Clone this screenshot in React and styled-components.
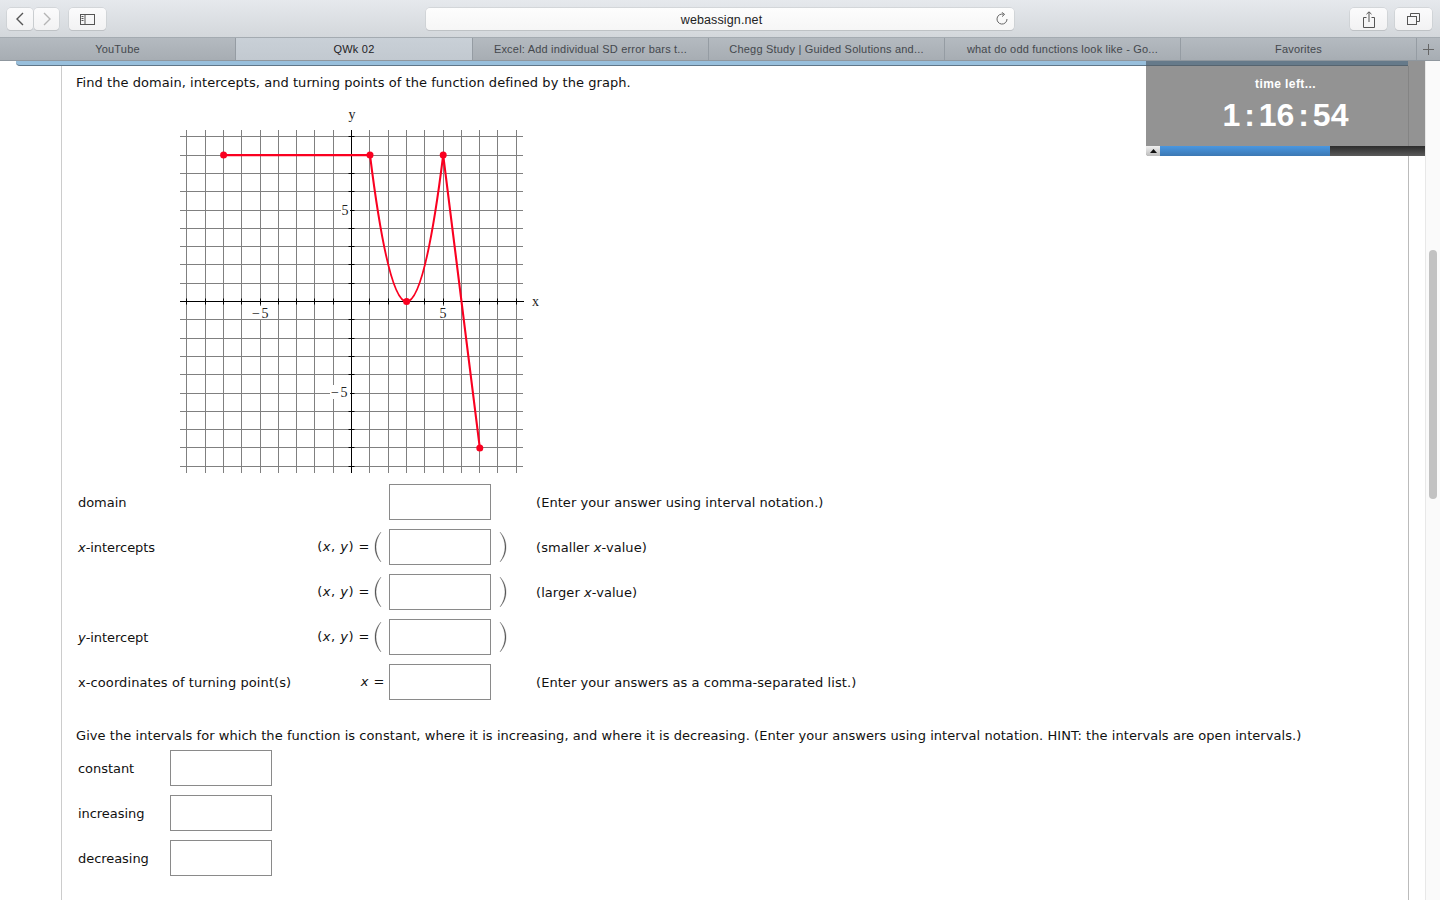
import React from "react";
import styled, { createGlobalStyle } from "styled-components";

const GlobalStyle = createGlobalStyle`
	html, body {
		margin: 0;
		padding: 0;
		height: 100%;
		overflow: hidden;
		background: #fff;
	}
`;

const Window = styled.div`
	width: 1440px;
	height: 900px;
	display: flex;
	flex-direction: column;
	overflow: hidden;
	font-family: "DejaVu Sans", Verdana, sans-serif;
`;

const Toolbar = styled.div`
	height: 38px;
	box-sizing: border-box;
	padding: 8px 8px 7px 7px;
	display: flex;
	align-items: stretch;
	background: linear-gradient(#e6e9ed, #d3d7db);
	border-bottom: 1px solid #a4abb1;
`;

const ToolButton = styled.div`
	width: ${({ $w }) => $w}px;
	margin-left: ${({ $ml }) => $ml || 0}px;
	flex: none;
	box-sizing: border-box;
	display: flex;
	align-items: center;
	justify-content: center;
	background: linear-gradient(#fbfbfc, #f2f2f3);
	border-radius: 4px;
	box-shadow: 0 0 0 0.5px #c4c7ca, 0 1px 0 #b9bcc0;
`;

const AddressBar = styled.div`
	width: 588px;
	margin-left: 320px;
	padding: 2px 0 0 3px;
	box-sizing: border-box;
	flex: none;
	position: relative;
	display: flex;
	align-items: center;
	justify-content: center;
	background: linear-gradient(#fdfdfd, #f6f6f6);
	border-radius: 4px;
	box-shadow: 0 0 0 0.5px #c4c7ca, 0 1px 0 #b9bcc0;
	font: 12.5px "Liberation Sans", Arial, sans-serif;
	letter-spacing: 0.12px;
	color: #222;
`;

const Reload = styled.svg`
	position: absolute;
	right: 5px;
	top: 4px;
`;

const TabStrip = styled.div`
	height: 23px;
	box-sizing: border-box;
	display: flex;
	background: linear-gradient(#b4bac0, #a7adb3);
	border-bottom: 1px solid #8f979e;
`;

const Tab = styled.div`
	width: ${({ $active }) => ($active ? 237 : 236)}px;
	flex: none;
	box-sizing: border-box;
	padding: 0 20px;
	display: flex;
	align-items: center;
	justify-content: center;
	border-right: 1px solid #959ca3;
	font: 11px "Liberation Sans", Arial, sans-serif;
	letter-spacing: 0.2px;
	color: ${({ $active }) => ($active ? "#1f2225" : "#44484d")};
	background: ${({ $active }) => ($active ? "linear-gradient(#c9d0d7, #c2c9d0)" : "transparent")};
	white-space: nowrap;
`;

const NewTab = styled.div`
	flex: 1;
	display: flex;
	align-items: center;
	justify-content: center;
`;

const Viewport = styled.div`
	flex: 1;
	min-height: 0;
	position: relative;
	display: flex;
`;

const Page = styled.div`
	flex: 1;
	min-width: 0;
	overflow: hidden;
`;

const BlueStrip = styled.div`
	height: 4px;
	margin-left: 16px;
	background: #98bfdc;
	border-bottom: 1px solid #5f7688;
	border-bottom-left-radius: 4px;
`;

const Sheet = styled.div`
	width: 1348px;
	height: 840px;
	margin-left: 61px;
	box-sizing: border-box;
	padding: 8px 14px 0;
	border-left: 1px solid #ccc;
	border-right: 1px solid #bbb;
	font-size: 13px;
	line-height: 18px;
	letter-spacing: 0.06px;
	color: #111;
`;

const Question = styled.p`
	margin: 0;
	white-space: nowrap;
	letter-spacing: 0.05px;
`;

const GraphSvg = styled.svg`
	display: block;
	margin: 8px 0 4px 94px;
`;

const AnswerGrid = styled.div`
	display: grid;
	grid-template-columns: ${({ $cols }) => $cols};
	grid-auto-rows: 36px;
	row-gap: 9px;
	align-items: center;
	padding-left: 2px;
`;

const Label = styled.div`
	padding-top: 2px;
	white-space: nowrap;
	letter-spacing: ${({ $long }) => ($long ? "0.09px" : "-0.05px")};
`;

const MathCell = styled.div`
	display: flex;
	justify-content: flex-end;
	align-items: center;
	white-space: nowrap;
`;

const MathText = styled.span`
	margin-right: ${({ $mr }) => $mr}px;
	letter-spacing: 0.5px;
`;

const Paren = styled.svg`
	display: block;
	flex: none;
	margin: ${({ $m }) => $m};
`;

const Note = styled.div`
	padding-top: 2px;
	white-space: nowrap;
`;

const Box = styled.div`
	width: 102px;
	height: 36px;
	box-sizing: border-box;
	border: 1px solid #8a8a8a;
	background: #fff;
`;

const IntervalPrompt = styled.p`
	margin: 27px 0 5px;
	white-space: nowrap;
`;

const Scrollbar = styled.div`
	width: 15px;
	flex: none;
	box-sizing: border-box;
	background: #fafafa;
	border-left: 1px solid #e8e8e8;
	padding: 189px 3px 0 3px;
`;

const Thumb = styled.div`
	height: 249px;
	border-radius: 4px;
	background: #c2c2c2;
`;

const TimerPanel = styled.div`
	position: absolute;
	top: 0;
	right: 15px;
	width: 279px;
	height: 95px;
	display: flex;
	flex-direction: column;
	background: #939393;
	color: #fff;
	font-family: "Liberation Sans", Arial, sans-serif;
	font-weight: 700;
	border-bottom-left-radius: 3px;
	overflow: hidden;
`;

const TimerTop = styled.div`
	height: 5px;
	width: 262px;
	box-sizing: border-box;
	flex: none;
	background: #667a8a;
	border-bottom: 1px solid #56646f;
`;

const TimerBody = styled.div`
	flex: 1;
	width: 279px;
	box-sizing: border-box;
	text-align: center;
	position: relative;
`;

const TimerRule = styled.div`
	position: absolute;
	top: 0;
	bottom: 0;
	left: 262px;
	width: 1px;
	background: #848484;
`;

const TimeLeft = styled.div`
	font-size: 12px;
	line-height: 14px;
	margin-top: 11px;
	letter-spacing: 0.4px;
`;

const Clock = styled.div`
	font-size: 32px;
	line-height: 36px;
	margin-top: 6px;
	white-space: pre;
	word-spacing: -5px;
`;

const ProgressRow = styled.div`
	height: 10px;
	flex: none;
	display: flex;
`;

const ToggleButton = styled.div`
	width: 14px;
	flex: none;
	display: flex;
	align-items: center;
	justify-content: center;
	background: linear-gradient(#f0f0f0, #bdbdbd);
`;

const ProgressFill = styled.div`
	width: 170px;
	flex: none;
	background: linear-gradient(#4a97e0, #3c78b4);
`;

const ProgressRest = styled.div`
	flex: 1;
	background: linear-gradient(#2c2c2c, #5a5a5a);
`;

const tabs = [
	{ title: "YouTube" },
	{ title: "QWk 02", active: true },
	{ title: "Excel: Add individual SD error bars t..." },
	{ title: "Chegg Study | Guided Solutions and..." },
	{ title: "what do odd functions look like - Go..." },
	{ title: "Favorites" },
];

const X0 = 181.5;
const Y0 = 201.5;
const STEP = 18.3;
const px = v => X0 + v * STEP;
const py = v => Y0 - v * STEP;
const cx = v => px(v) + 0.2;
const snap = v => Math.round(v - 0.5) + 0.5;
const ticks = Array.from({ length: 19 }, (_, i) => i - 9);

function Graph() {
	const GRID = "#808080";
	const RED = "#fa0020";
	const dots = [
		[-7, 8],
		[1, 8],
		[5, 8],
		[3, 0],
		[7, -8],
	];
	return (
		<GraphSvg width='380' height='380' viewBox='0 0 380 380'>
			{ticks.map(t =>
				t === 0 ? null : (
					<g key={t} stroke={GRID} strokeWidth='1'>
						<line x1={snap(px(t))} x2={snap(px(t))} y1='30' y2='373' />
						<line y1={snap(py(t))} y2={snap(py(t))} x1='10' x2='353' />
					</g>
				),
			)}
			{ticks.map(t => (
				<g key={"tick" + t} stroke='#000' strokeWidth='1'>
					<line x1={snap(px(t))} x2={snap(px(t))} y1={Y0 - 3} y2={Y0 + 3} />
					<line y1={snap(py(t))} y2={snap(py(t))} x1={X0 - 3} x2={X0 + 3} />
				</g>
			))}
			<line x1='10' x2='354' y1={Y0} y2={Y0} stroke='#000' />
			<line x1={X0} x2={X0} y1='30' y2='373' stroke='#000' />

			<g fontFamily='"Liberation Serif", serif' fontSize='14' fill='#222'>
				<rect x='81' y='206' width='20' height='13' fill='#fff' />
				<rect x='268' y='206' width='10' height='13' fill='#fff' />
				<rect x='171' y='104' width='9' height='14' fill='#fff' />
				<rect x='160' y='285' width='20' height='14' fill='#fff' />
				<text x='182' y='19' textAnchor='middle'>y</text>
				<text x='362' y='206'>x</text>
				<text x='82' y='218' letterSpacing='1.5'>−5</text>
				<text x='273' y='218' textAnchor='middle'>5</text>
				<text x='175' y='115' textAnchor='middle'>5</text>
				<text x='161' y='297' letterSpacing='1.5'>−5</text>
			</g>

			<path
				d={`M${cx(-7)} ${py(8)} L${cx(1)} ${py(8)} Q${cx(3)} ${py(-8)} ${cx(5)} ${py(8)} L${cx(7)} ${py(-8)}`}
				fill='none'
				stroke={RED}
				strokeWidth='2.1'
				strokeLinejoin='round'
			/>
			{dots.map(([x, y]) => (
				<circle key={x} cx={cx(x)} cy={py(y)} r='3.5' fill={RED} />
			))}
		</GraphSvg>
	);
}

const OpenParen = () => (
	<Paren $m='0 7px 0 4px' width='8' height='32' viewBox='0 0 8 32'>
		<path d='M7 1 C2.5 6 1 11 1 16 C1 21 2.5 26 7 31 C3.5 26 2 21 2 16 C2 11 3.5 6 7 1Z' fill='#555' stroke='#555' strokeWidth='0.3' />
	</Paren>
);

const CloseParen = () => (
	<Paren $m='0 0 0 8px' width='8' height='32' viewBox='0 0 8 32'>
		<path d='M1 1 C5.5 6 7 11 7 16 C7 21 5.5 26 1 31 C4.5 26 6 21 6 16 C6 11 4.5 6 1 1Z' fill='#555' stroke='#555' strokeWidth='0.3' />
	</Paren>
);

const PointMath = () => (
	<MathCell>
		<MathText $mr={0}>
			(<i>x</i>, <i>y</i>) =
		</MathText>
		<OpenParen />
	</MathCell>
);

const IconStroke = ({ w, h, children, color = "#555" }) => (
	<svg width={w} height={h} viewBox={`0 0 ${w} ${h}`} fill='none' stroke={color} strokeWidth='1'>
		{children}
	</svg>
);

function App() {
	return (
		<Window>
			<GlobalStyle />
			<Toolbar>
				<ToolButton $w={26}>
					<IconStroke w={10} h={14} color='#555'>
						<path d='M8 1 L2 7 L8 13' strokeWidth='1.4' />
					</IconStroke>
				</ToolButton>
				<ToolButton $w={25} $ml={1}>
					<IconStroke w={10} h={14} color='#b5b5b5'>
						<path d='M2 1 L8 7 L2 13' strokeWidth='1.4' />
					</IconStroke>
				</ToolButton>
				<ToolButton $w={37} $ml={10}>
					<IconStroke w={15} h={11}>
						<rect x='0.5' y='0.5' width='14' height='10' />
						<path d='M5 0.5 V10.5 M1.5 2.5 H3.5 M1.5 4.5 H3.5 M1.5 6.5 H3.5' />
					</IconStroke>
				</ToolButton>
				<AddressBar>
					webassign.net
					<Reload width='14' height='14' viewBox='0 0 14 14' fill='none' stroke='#666'>
						<path d='M8.5 2.3 A5 5 0 1 0 12 7' />
						<path d='M6.8 0.3 L9.6 2.4 L7 4.6' />
					</Reload>
				</AddressBar>
				<ToolButton $w={37} $ml={336}>
					<IconStroke w={12} h={17}>
						<path d='M3.5 6.5 H0.5 V16.5 H11.5 V6.5 H8.5 M6 11 V1 M3.5 3.2 L6 0.8 L8.5 3.2' />
					</IconStroke>
				</ToolButton>
				<ToolButton $w={37} $ml={8}>
					<IconStroke w={13} h={12}>
						<rect x='0.5' y='3.5' width='9' height='8' />
						<path d='M3.5 3.5 V0.5 H12.5 V8.5 H9.5' />
					</IconStroke>
				</ToolButton>
			</Toolbar>

			<TabStrip>
				{tabs.map(t => (
					<Tab key={t.title} $active={t.active}>
						{t.title}
					</Tab>
				))}
				<NewTab>
					<IconStroke w={11} h={11} color='#666'>
						<path d='M5.5 0 V11 M0 5.5 H11' />
					</IconStroke>
				</NewTab>
			</TabStrip>

			<Viewport>
				<Page>
					<BlueStrip />
					<Sheet>
						<Question>Find the domain, intercepts, and turning points of the function defined by the graph.</Question>
						<Graph />
						<AnswerGrid $cols='240px 71px 102px 45px 1fr'>
							<Label>domain</Label>
							<MathCell />
							<Box />
							<span />
							<Note>(Enter your answer using interval notation.)</Note>

							<Label>
								<i>x</i>-intercepts
							</Label>
							<PointMath />
							<Box />
							<CloseParen />
							<Note>
								(smaller <i>x</i>-value)
							</Note>

							<Label />
							<PointMath />
							<Box />
							<CloseParen />
							<Note>
								(larger <i>x</i>-value)
							</Note>

							<Label>
								<i>y</i>-intercept
							</Label>
							<PointMath />
							<Box />
							<CloseParen />
							<Note />

							<Label $long>x-coordinates of turning point(s)</Label>
							<MathCell>
								<MathText $mr={4}>
									<i>x</i> =
								</MathText>
							</MathCell>
							<Box />
							<span />
							<Note>(Enter your answers as a comma-separated list.)</Note>
						</AnswerGrid>

						<IntervalPrompt>
							Give the intervals for which the function is constant, where it is increasing, and where it is decreasing. (Enter your answers using interval notation. HINT: the intervals are open intervals.)
						</IntervalPrompt>
						<AnswerGrid $cols='92px 102px'>
							<Label>constant</Label>
							<Box />
							<Label>increasing</Label>
							<Box />
							<Label>decreasing</Label>
							<Box />
						</AnswerGrid>
					</Sheet>
				</Page>
				<Scrollbar>
					<Thumb />
				</Scrollbar>
				<TimerPanel>
					<TimerTop />
					<TimerBody>
						<TimerRule />
						<TimeLeft>time left...</TimeLeft>
						<Clock>1 : 16 : 54</Clock>
					</TimerBody>
					<ProgressRow>
						<ToggleButton>
							<svg width='7' height='4' viewBox='0 0 7 4'>
								<path d='M3.5 0 L7 4 H0 Z' fill='#111' />
							</svg>
						</ToggleButton>
						<ProgressFill />
						<ProgressRest />
					</ProgressRow>
				</TimerPanel>
			</Viewport>
		</Window>
	);
}

export default App;
